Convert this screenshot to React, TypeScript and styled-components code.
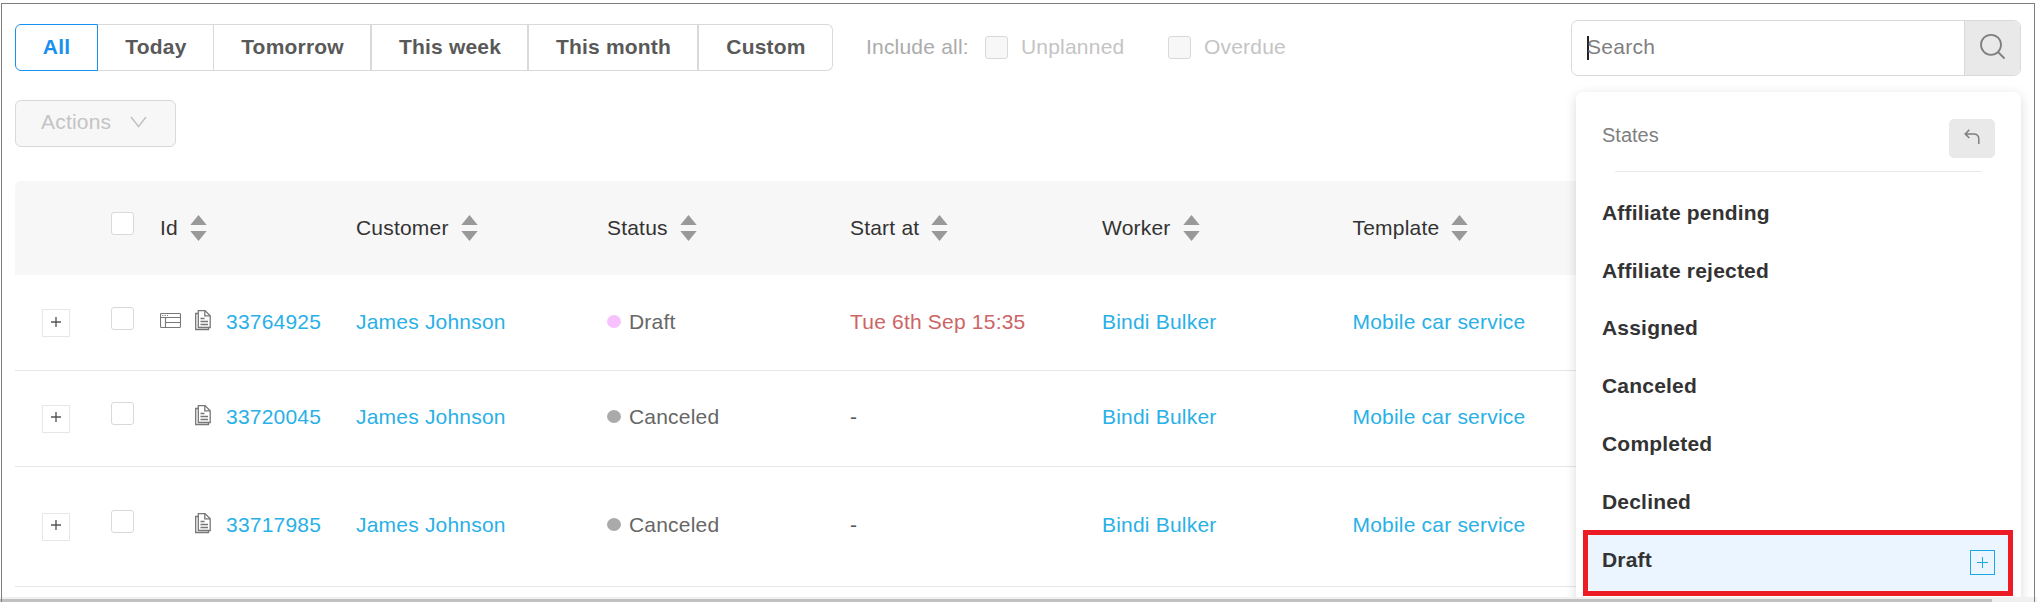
import React from "react";
import styled, { createGlobalStyle, css } from "styled-components";

const GlobalStyle = createGlobalStyle`
  *, *::before, *::after { box-sizing: border-box; }
  body {
    margin: 0;
    background: #fff;
    overflow: hidden;
    font-family: "Liberation Sans", Arial, sans-serif;
    font-size: 21px;
    line-height: 24px;
    letter-spacing: 0.2px;
  }
`;

const Page = styled.div`
  position: relative;
  height: 602px;
  padding: 3px 2px 0 1px;
  overflow: hidden;
`;

const Frame = styled.main`
  height: 640px;
  border: 1px solid #7f7f7f;
  padding: 16px 13px 0 13px;
`;

const Toolbar = styled.div`
  display: flex;
  align-items: flex-start;
  justify-content: space-between;
`;

const Filters = styled.div`
  display: flex;
  align-items: center;
  margin-top: 4px;
`;

const Tabs = styled.div`
  display: flex;
`;

const Tab = styled.button<{ $width: number; $active?: boolean; $thick?: boolean }>`
  width: ${(p) => p.$width}px;
  height: 47px;
  padding: 0 0 2px 1px;
  background: #fff;
  border: 1px solid #d9d9d9;
  border-left-width: 0;
  color: #595959;
  font: bold 21px/43px "Liberation Sans", Arial, sans-serif;
  letter-spacing: 0.2px;
  text-align: center;
  ${(p) => p.$thick && css`border-right-width: 2px;`}
  ${(p) =>
    p.$active &&
    css`
      color: #1890ee;
      border: 1px solid #1890ee;
      padding: 0 0 2px;
    `}
  &:first-child { border-radius: 6px 0 0 6px; }
  &:last-child { border-radius: 0 6px 6px 0; }
`;

const IncludeLabel = styled.span`
  margin-left: 33px;
  padding-bottom: 2px;
  width: 119px;
  color: #ababab;
`;

const CheckBox = styled.span<{ $disabled?: boolean }>`
  display: block;
  width: 23px;
  height: 23px;
  border: 1px solid #d9d9d9;
  border-radius: 3px;
  background: ${(p) => (p.$disabled ? "#f7f7f7" : "#fff")};
`;

const CheckOption = styled.label<{ $width: number }>`
  display: flex;
  align-items: center;
  gap: 13px;
  width: ${(p) => p.$width}px;
  color: #c4c4c4;
`;

const OptionText = styled.span`
  padding-bottom: 2px;
`;

const SearchBox = styled.div`
  display: flex;
  width: 450px;
  height: 56px;
  border: 1px solid #d9d9d9;
  border-radius: 7px;
  overflow: hidden;
`;

const SearchField = styled.div`
  flex: 1;
  display: flex;
  align-items: center;
  padding-left: 15px;
  color: #7f7f7f;
  letter-spacing: 0.3px;
  > span:last-child { padding-bottom: 2px; }
`;

const Caret = styled.span`
  width: 2px;
  height: 24px;
  margin-right: -2px;
  background: #222;
`;

const SearchButton = styled.div`
  width: 56px;
  background: #e9e9e9;
  border-left: 1px solid #d9d9d9;
  padding: 12px 0 0 14px;
  svg { display: block; }
`;

const ActionsButton = styled.div`
  display: flex;
  align-items: center;
  justify-content: space-between;
  width: 161px;
  height: 47px;
  margin-top: 24px;
  padding: 0 28px 3px 25px;
  border: 1px solid #d9d9d9;
  border-radius: 6px;
  background: #f7f7f7;
  color: #c4c4c4;
`;

const Table = styled.div`
  margin-top: 34px;
`;

const columns = css`
  display: grid;
  grid-template-columns: 69px 49px 196px 251px 243px 252px 250.5px 1fr;
  padding-left: 27px;
  align-items: center;
`;

const HeaderRow = styled.div`
  ${columns}
  height: 94px;
  background: #f7f7f7;
  border-radius: 6px 6px 0 0;
  color: #333;
  > ${CheckBox} { margin-bottom: 9px; }
`;

const HeaderCell = styled.div`
  display: flex;
  align-items: center;
  gap: 12px;
`;

const Row = styled.div<{ $height: number; $lift: number }>`
  ${columns}
  height: ${(p) => p.$height}px;
  border-bottom: 1px solid #e6e6e6;
  > * { padding-bottom: ${(p) => p.$lift * 2}px; }
  > ${CheckBox} {
    padding: 0;
    margin-bottom: ${(p) => 6 + p.$lift * 2}px;
  }
`;

const Expander = styled.div`
  display: flex;
  align-items: center;
  justify-content: center;
  width: 28px;
  height: 28px;
  border: 1px solid #e6e6e6;
`;

const IdCell = styled.div`
  display: flex;
  align-items: center;
`;

const IconSlot = styled.span<{ $width: number }>`
  width: ${(p) => p.$width}px;
  height: 21px;
  margin-bottom: 2px;
  svg { display: block; }
`;

const Link = styled.a`
  color: #29b0e6;
  text-decoration: none;
  white-space: nowrap;
`;

const Status = styled.div`
  display: flex;
  align-items: center;
  gap: 8px;
  color: #666;
`;

const Dot = styled.span<{ $color: string }>`
  width: 14px;
  height: 13px;
  border-radius: 50%;
  background: ${(p) => p.$color};
`;

const StartAt = styled.div<{ $late: boolean }>`
  color: ${(p) => (p.$late ? "#cd6465" : "#555")};
`;

const Menu = styled.section`
  position: absolute;
  top: 92px;
  left: 1576px;
  width: 445px;
  height: 540px;
  padding: 27px 12px 0;
  border-radius: 7px;
  background: #fff;
  box-shadow: 0 3px 12px rgba(0, 0, 0, 0.15);
`;

const MenuHeader = styled.div`
  display: flex;
  justify-content: space-between;
  padding: 0 14px;
  color: #808080;
  font-size: 20px;
  line-height: 32px;
  letter-spacing: 0;
`;

const BackButton = styled.div`
  width: 46px;
  height: 39px;
  border-radius: 5px;
  background: #e9e9e9;
  padding: 10px 0 0 15px;
  svg { display: block; }
`;

const MenuDivider = styled.hr`
  height: 1px;
  border: 0;
  margin: 13px 27px 15px;
  background: #e9e9e9;
`;

const MenuItem = styled.div<{ $active?: boolean }>`
  display: flex;
  align-items: center;
  justify-content: space-between;
  height: 57.8px;
  padding: 0 14px;
  border-radius: 6px;
  color: #333;
  font-weight: bold;
  background: ${(p) => (p.$active ? "#ebf5ff" : "transparent")};
  > span { padding-bottom: 6px; }
`;

const AddBox = styled.i`
  display: flex;
  align-items: center;
  justify-content: center;
  width: 25px;
  height: 25px;
  border: 1px solid #1ba8e3;
`;

const Highlight = styled.div`
  position: absolute;
  top: 530px;
  left: 1583px;
  width: 430px;
  height: 66px;
  border: 5px solid #ed1c24;
`;

const ScrollTrack = styled.div`
  position: absolute;
  left: 0;
  right: 0;
  bottom: 0;
  height: 5px;
  padding-top: 2px;
  background: #f0f0f0;
`;

const ScrollThumb = styled.div`
  width: 1992px;
  height: 3px;
  background: #c1c1c1;
`;

const FrameEdge = styled.div<{ $left: number }>`
  position: absolute;
  bottom: 0;
  left: ${(p) => p.$left}px;
  width: 1px;
  height: 5px;
  background: #7f7f7f;
`;

const SortIcon = () => (
  <svg width="17" height="26" viewBox="0 0 17 26" fill="#999">
    <path d="M8.5 0 16.7 10H.3zM8.5 26 16.7 16H.3z" />
  </svg>
);

const PlusIcon = ({ size, color, weight }: { size: number; color: string; weight: number }) => (
  <svg width={size} height={size} viewBox="0 0 11 11" stroke={color} strokeWidth={weight}>
    <path d="M5.5 0V11M0 5.5H11" />
  </svg>
);

const FormIcon = () => (
  <svg width="21" height="21" viewBox="0 0 21 21" fill="none" stroke="#777" strokeWidth="1.1">
    <rect x="0.5" y="3.5" width="20" height="14" rx="1" />
    <path d="M.5 7.5H20.5M5.5 7.5V17.5M5.5 12.5H20.5" />
    <path d="M2 5.5H8" strokeDasharray="1.5 1" strokeWidth="0.8" />
  </svg>
);

const CopyIcon = () => (
  <svg width="16" height="21" viewBox="0 0 16 21" fill="none" stroke="#777" strokeWidth="1.3">
    <path d="M3 3.5H.7V19.5H13.5V17.5" />
    <path d="M3.3 .6H10L15.2 5.8V17.5H3.3z" />
    <path d="M9.8 .8V5.8H15" />
    <path d="M5.5 8.5H9.5M5.5 11.5H13M5.5 14.5H13" />
  </svg>
);

const SearchIcon = () => (
  <svg width="28" height="28" viewBox="0 0 28 28" fill="none" stroke="#7f7f7f" strokeWidth="1.8">
    <circle cx="12" cy="11.8" r="10" />
    <path d="M19 19 25.5 25.5" />
  </svg>
);

const ReturnIcon = () => (
  <svg width="16" height="16" viewBox="0 0 16 16" fill="none" stroke="#7f7f7f" strokeWidth="1.5">
    <path d="M5.3 .8 1.2 4.9 5.3 9M1.2 4.9H9.5Q14.8 4.9 14.8 10V15" />
  </svg>
);

const tabs = [
  { label: "All", width: 83, active: true },
  { label: "Today", width: 116 },
  { label: "Tomorrow", width: 158, thick: true },
  { label: "This week", width: 157, thick: true },
  { label: "This month", width: 170, thick: true },
  { label: "Custom", width: 134 },
];

const headers = ["Id", "Customer", "Status", "Start at", "Worker", "Template"];

const jobs = [
  { id: "33764925", form: true, status: "Draft", color: "#f7c1ff", start: "Tue 6th Sep 15:35", height: 96, lift: 1 },
  { id: "33720045", form: false, status: "Canceled", color: "#aaa", start: "-", height: 96, lift: 2 },
  { id: "33717985", form: false, status: "Canceled", color: "#aaa", start: "-", height: 120, lift: 2 },
];

const states = [
  "Affiliate pending",
  "Affiliate rejected",
  "Assigned",
  "Canceled",
  "Completed",
  "Declined",
  "Draft",
];

export default function App() {
  return (
    <Page>
      <GlobalStyle />
      <Frame>
        <Toolbar>
          <Filters>
            <Tabs>
              {tabs.map((t) => (
                <Tab key={t.label} $width={t.width} $active={t.active} $thick={t.thick}>
                  {t.label}
                </Tab>
              ))}
            </Tabs>
            <IncludeLabel>Include all:</IncludeLabel>
            <CheckOption $width={183}>
              <CheckBox $disabled />
              <OptionText>Unplanned</OptionText>
            </CheckOption>
            <CheckOption $width={130}>
              <CheckBox $disabled />
              <OptionText>Overdue</OptionText>
            </CheckOption>
          </Filters>
          <SearchBox>
            <SearchField>
              <Caret />
              <span>Search</span>
            </SearchField>
            <SearchButton>
              <SearchIcon />
            </SearchButton>
          </SearchBox>
        </Toolbar>

        <ActionsButton>
          Actions
          <svg width="17" height="12" viewBox="0 0 17 12" fill="none" stroke="#c0c0c0" strokeWidth="1.4">
            <path d="M1 1 8.5 10.5 16 1" />
          </svg>
        </ActionsButton>

        <Table>
          <HeaderRow>
            <span />
            <CheckBox />
            {headers.map((h) => (
              <HeaderCell key={h}>
                {h}
                <SortIcon />
              </HeaderCell>
            ))}
          </HeaderRow>
          {jobs.map((job) => (
            <Row key={job.id} $height={job.height} $lift={job.lift}>
              <Expander>
                <PlusIcon size={10} color="#555" weight={1.5} />
              </Expander>
              <CheckBox />
              <IdCell>
                <IconSlot $width={35}>{job.form && <FormIcon />}</IconSlot>
                <IconSlot $width={31}>
                  <CopyIcon />
                </IconSlot>
                <Link>{job.id}</Link>
              </IdCell>
              <Link>James Johnson</Link>
              <Status>
                <Dot $color={job.color} />
                {job.status}
              </Status>
              <StartAt $late={job.start !== "-"}>{job.start}</StartAt>
              <Link>Bindi Bulker</Link>
              <Link>Mobile car service</Link>
            </Row>
          ))}
        </Table>
      </Frame>

      <Menu>
        <MenuHeader>
          States
          <BackButton>
            <ReturnIcon />
          </BackButton>
        </MenuHeader>
        <MenuDivider />
        {states.map((s) => (
          <MenuItem key={s} $active={s === "Draft"}>
            <span>{s}</span>
            {s === "Draft" && (
              <AddBox>
                <PlusIcon size={11} color="#1ba8e3" weight={1} />
              </AddBox>
            )}
          </MenuItem>
        ))}
      </Menu>
      <Highlight />
      <ScrollTrack>
        <ScrollThumb />
      </ScrollTrack>
      <FrameEdge $left={1} />
      <FrameEdge $left={2034} />
    </Page>
  );
}
